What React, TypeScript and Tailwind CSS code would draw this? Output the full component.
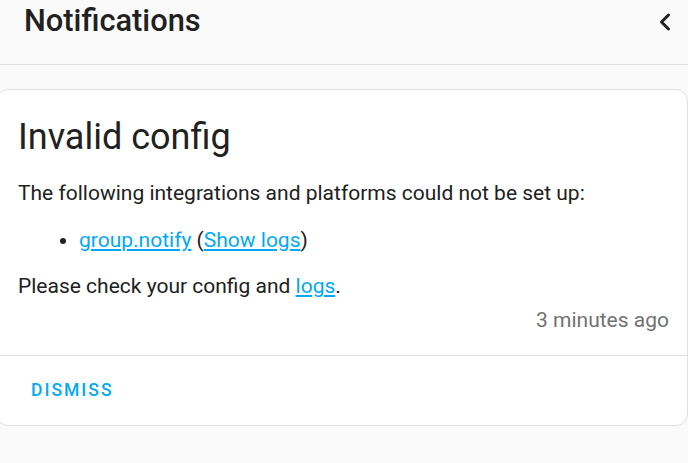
import { ChevronLeft } from "lucide-react";

export default function App() {
  return (
    <div className="h-[463px] w-[688px] overflow-hidden bg-[#fafafa] font-['Roboto',sans-serif] text-[#212121]">
      <div className="flex h-[65px] items-center justify-between border-b border-[#e0e0e0] pl-6 pr-[9px]">
        <h1 className="-mt-[22px] text-[30.8px] font-medium">Notifications</h1>
        <ChevronLeft className="-mt-5 h-7 w-7 text-[#212121]" strokeWidth={2.6} />
      </div>

      <div className="-ml-1 mt-6 w-[692px] rounded-xl border border-[#e0e0e0] bg-white">
        <div className="pl-[21px] pr-[18px] pt-[25px] pb-[21px]">
          <h2 className="text-[36px] leading-[44px] font-normal">Invalid config</h2>
          <p className="mt-5 text-[21px] leading-7">
            The following integrations and platforms could not be set up:
          </p>
          <ul className="mt-[19px] list-disc pl-[61px] text-[21px] leading-7">
            <li>
              <a href="#" className="text-[#03a9f4] underline">group.notify</a> (<a href="#" className="text-[#03a9f4] underline">Show logs</a>)
            </li>
          </ul>
          <p className="mt-[18px] text-[21px] leading-7">
            Please check your config and <a href="#" className="text-[#03a9f4] underline">logs</a>.
          </p>
          <div className="mt-1.5 text-right text-[21px] leading-7 text-[#727272]">3 minutes ago</div>
        </div>
        <div className="border-t border-[#e0e0e0] px-[18px] pt-[22px] pb-[22px]">
          <button className="px-4 text-[17.5px] leading-6 font-medium tracking-[0.115em] text-[#03a9f4]">DISMISS</button>
        </div>
      </div>
    </div>
  );
}
